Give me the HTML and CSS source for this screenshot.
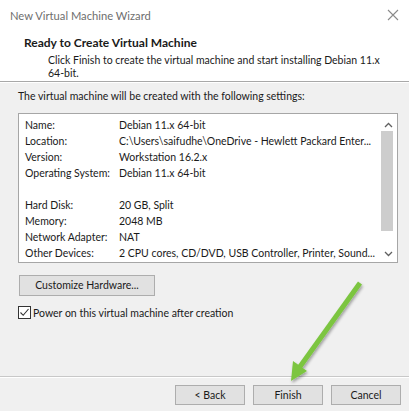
FILE: index.html
```html
<!DOCTYPE html>
<html>
<head>
<meta charset="utf-8">
<link rel="stylesheet" href="styles.css">
</head>
<body>
<div class="window">
  <div class="top">
    <div class="titlebar">
      <span class="wintitle">New Virtual Machine Wizard</span>
      <svg class="close" width="12" height="12" viewBox="0 0 12 12"><path d="M1 1L11 11M11 1L1 11" stroke="#8a8a8a" stroke-width="1.1" fill="none"/></svg>
    </div>
    <div class="header">
      <div class="h-title">Ready to Create Virtual Machine</div>
      <div class="h-sub">Click Finish to create the virtual machine and start installing Debian 11.x<br>64-bit.</div>
    </div>
  </div>
  <div class="body">
    <div class="intro">The virtual machine will be created with the following settings:</div>
    <div class="listbox">
      <div class="rows">
        <div class="row"><span class="k">Name:</span><span class="v">Debian 11.x 64-bit</span></div>
        <div class="row"><span class="k">Location:</span><span class="v">C:\Users\saifudhe\OneDrive - Hewlett Packard Enter...</span></div>
        <div class="row"><span class="k">Version:</span><span class="v">Workstation 16.2.x</span></div>
        <div class="row"><span class="k">Operating System:</span><span class="v">Debian 11.x 64-bit</span></div>
        <div class="row"></div>
        <div class="row"><span class="k">Hard Disk:</span><span class="v">20 GB, Split</span></div>
        <div class="row"><span class="k">Memory:</span><span class="v">2048 MB</span></div>
        <div class="row"><span class="k">Network Adapter:</span><span class="v">NAT</span></div>
        <div class="row"><span class="k">Other Devices:</span><span class="v">2 CPU cores, CD/DVD, USB Controller, Printer, Sound...</span></div>
      </div>
      <div class="scrollbar">
        <svg class="arr" width="9" height="6" viewBox="0 0 9 6"><path d="M1 5L4.5 1.5L8 5" stroke="#606060" stroke-width="1.3" fill="none"/></svg>
        <div class="track"><div class="thumb"></div></div>
        <svg class="arr" width="9" height="6" viewBox="0 0 9 6"><path d="M1 1L4.5 4.5L8 1" stroke="#606060" stroke-width="1.3" fill="none"/></svg>
      </div>
    </div>
    <button class="btn custom">Customize Hardware...</button>
    <label class="check">
      <span class="box"><svg width="11" height="11" viewBox="0 0 11 11"><path d="M1.5 5.5L4.2 8.3L9.5 2" stroke="#333" stroke-width="1.1" fill="none"/></svg></span>
      <span>Power on this virtual machine after creation</span>
    </label>
  </div>
  <div class="footer">
    <button class="btn">&lt; Back</button>
    <button class="btn">Finish</button>
    <button class="btn">Cancel</button>
  </div>
  <svg class="arrow" width="409" height="411" viewBox="0 0 409 411">
    <defs>
      <filter id="sh" x="-20%" y="-20%" width="140%" height="140%">
        <feGaussianBlur in="SourceAlpha" stdDeviation="1.5"/>
        <feOffset dx="1" dy="2" result="b"/>
        <feComponentTransfer><feFuncA type="linear" slope="0.35"/></feComponentTransfer>
        <feMerge><feMergeNode/><feMergeNode in="SourceGraphic"/></feMerge>
      </filter>
    </defs>
    <g filter="url(#sh)">
      <line x1="360" y1="283" x2="299" y2="368" stroke="#7cc540" stroke-width="5" stroke-linecap="butt"/>
      <polygon points="291,381 293,361 307,371" fill="#7cc540"/>
    </g>
  </svg>
</div>
</body>
</html>
```

FILE: styles.css
```css
* { box-sizing: border-box; }
html, body { margin: 0; padding: 0; }
body {
  width: 409px;
  height: 411px;
  overflow: hidden;
  background: #f0f0f0;
  font-family: Lato, "Noto Sans", sans-serif;
  font-size: 10.5px;
  color: #1a1a1a;
}
.window { position: relative; width: 409px; height: 411px; }
.top { background: #fff; border-bottom: 1px solid #a8a8a8; height: 82px; }
.titlebar {
  height: 30px;
  display: flex;
  align-items: center;
  justify-content: space-between;
  padding: 0 10px 0 10px;
}
.wintitle { color: #6e6e6e; font-size: 11.2px; }
.header { padding: 5px 12px 0 24px; }
.h-title { font-weight: bold; font-size: 12px; line-height: 16px; }
.h-sub { padding-left: 24px; line-height: 13px; margin-top: 3px; white-space: nowrap; }
.body { padding: 6px 11px 0 18px; border-top: 1px solid #fff; }
.intro { line-height: 14px; height: 17px; }
.listbox {
  margin-top: 7px;
  height: 150px;
  background: #fff;
  border: 1px solid #a6a6a6;
  display: flex;
}
.rows { flex: 1; min-width: 0; overflow: hidden; padding: 3px 0 0 6px; }
.row { display: flex; height: 16px; line-height: 16px; white-space: nowrap; }
.k { width: 94px; flex: none; }
.scrollbar {
  width: 17px;
  flex: none;
  display: flex;
  flex-direction: column;
  align-items: center;
  padding: 8px 0 5px;
}
.track { flex: 1; width: 100%; padding: 3px 4px 4px 1px; }
.thumb { height: 100px; background: #cdcdcd; }
.arr { flex: none; }
.btn {
  font-family: inherit;
  font-size: 10.5px;
  color: #1a1a1a;
  background: #e1e1e1;
  border: 1px solid #adadad;
  height: 21px;
  padding: 0;
  line-height: 19px;
}
.custom { display: block; width: 136px; margin-top: 12px; margin-left: 1px; }
.check { display: flex; align-items: center; margin-top: 10px; gap: 2px; }
.box {
  width: 13px; height: 13px;
  border: 1px solid #333;
  background: #fff;
  display: flex; align-items: center; justify-content: center;
}
.footer {
  position: absolute;
  left: 0; right: 0; bottom: 0;
  height: 35px;
  border-top: 1px solid #c8c8c8;
  box-shadow: inset 0 1px 0 #fff;
  display: flex;
  justify-content: flex-end;
  align-items: flex-start;
  gap: 8px;
  padding: 8px 8px 0 0;
}
.footer .btn { width: 70px; height: 20px; }
.arrow { position: absolute; left: 0; top: 0; pointer-events: none; }
```
